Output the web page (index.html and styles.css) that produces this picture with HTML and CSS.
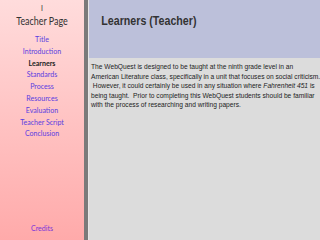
FILE: index.html
```html
<!DOCTYPE html>
<html>
<head>
<meta charset="utf-8">
<link rel="stylesheet" href="styles.css">
</head>
<body>
<div class="page">
  <nav class="side">
    <div class="top">
      <div class="mark">I</div>
      <div class="tp">Teacher Page</div>
    </div>
    <ul class="menu">
      <li><a>Title</a></li>
      <li><a>Introduction</a></li>
      <li class="cur">Learners</li>
      <li><a>Standards</a></li>
      <li><a>Process</a></li>
      <li><a>Resources</a></li>
      <li><a>Evaluation</a></li>
      <li><a>Teacher Script</a></li>
      <li><a>Conclusion</a></li>
    </ul>
    <div class="credits"><a>Credits</a></div>
  </nav>
  <div class="divider"></div>
  <main class="main">
    <header class="head"><h1>Learners (Teacher)</h1></header>
    <section class="body">
      <p>The WebQuest is designed to be taught at the ninth grade level in an<br>American Literature class, specifically in a unit that focuses on social criticism.<br>&nbsp;However, it could certainly be used in any situation where <i>Fahrenheit 451</i> is<br>being taught.&nbsp; Prior to completing this WebQuest students should be familiar<br>with the process of researching and writing papers.</p>
    </section>
  </main>
</div>
</body>
</html>
```
FILE: styles.css
```css
html, body { margin: 0; padding: 0; }
body { width: 320px; height: 240px; overflow: hidden; }
.page { display: flex; height: 240px; }
.side {
  width: 84px;
  flex: none;
  background: linear-gradient(#ffdcdc, #ffaaaa);
  font-family: Lato, "Open Sans", sans-serif;
  text-align: center;
  display: flex;
  flex-direction: column;
}
.top, .menu, .credits { transform: scaleX(0.85); transform-origin: center top; }
.top { padding-top: 3px; color: #333; }
.mark { font-size: 8px; line-height: 11px; }
.tp { font-size: 10.5px; line-height: 14px; }
.menu { list-style: none; margin: 0; padding: 6px 0 0; }
.menu li { font-size: 8.3px; line-height: 11.8px; }
.menu a { color: #5a3de0; }
.menu li.cur { color: #222; font-weight: bold; }
.credits { margin-top: auto; padding-bottom: 6px; font-size: 8.3px; line-height: 11px; }
.credits a { color: #7a35d8; }
.divider { width: 4px; flex: none; background: #7a7a7a; border-right: 1px solid #e6e6e6; }
.main { flex: 1; display: flex; flex-direction: column; background: #dcdcdc; overflow: hidden; }
.head { height: 58px; background: #bcc0da; }
.head h1 {
  margin: 0; padding: 13px 0 0 15px;
  font-family: "Liberation Sans", Arial, sans-serif;
  font-size: 13px; font-weight: bold; color: #333;
  transform: scaleX(0.82); transform-origin: left top;
  white-space: nowrap;
}
.body { padding: 4px 0 0 2px; }
.body p {
  margin: 0;
  font-family: "Liberation Sans", Arial, sans-serif;
  font-size: 8px; line-height: 9.5px; color: #222;
  white-space: nowrap;
  transform: scaleX(0.83); transform-origin: left top;
}
```
